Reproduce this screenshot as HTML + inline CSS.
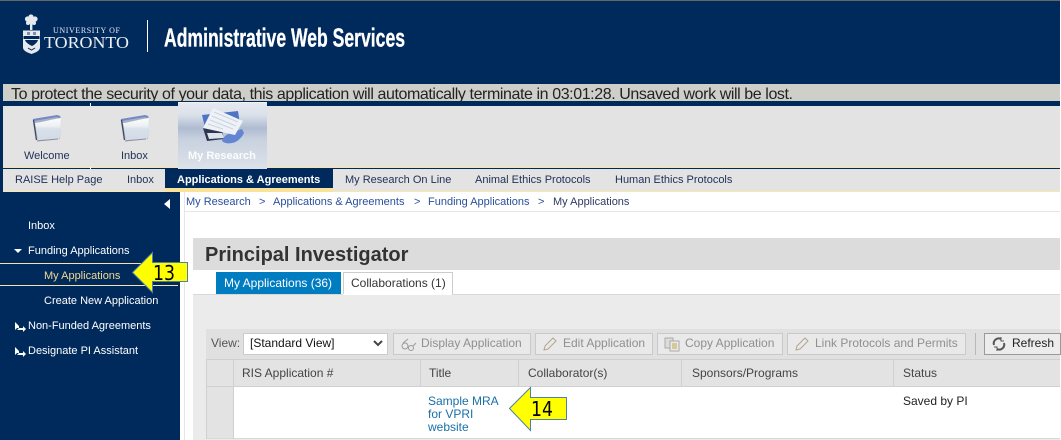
<!DOCTYPE html>
<html><head><meta charset="utf-8"><title>Administrative Web Services</title>
<style>
html,body{margin:0;padding:0;background:#fff}
#p{position:relative;width:1061px;height:440px;overflow:hidden;background:#fff;font:11px "Liberation Sans",Arial,sans-serif;color:#222}
#p div,#p span.t,#p svg{position:absolute}
.t{white-space:nowrap;line-height:14px;height:14px}
.s{color:#fff}
.n{color:#1f2f55}
.b{color:#2a4f9c}
.h{font-size:12px;color:#444}
.btn{background:#e9e9e9;border:1px solid #c9c9c9;box-sizing:border-box;top:333px;height:22px}
.g{font-size:12px;color:#8f8f8f}
.v{background:#d0d0d0;width:1px}
</style></head><body>
<div id="p">
<div style="left:0;top:0;width:1061px;height:106px;background:#002a5c"></div>
<div style="left:0;top:0;width:1061px;height:1px;background:#666"></div>
<div style="left:1060px;top:0;width:1px;height:440px;background:#fff"></div>

<!-- crest -->
<svg style="left:20px;top:12px" width="24" height="44" viewBox="0 0 24 44">
<g fill="#e6e9ee"><circle cx="11" cy="5" r="2.600"/><circle cx="7.500" cy="7" r="2.600"/><circle cx="15" cy="7" r="2.600"/><circle cx="11" cy="9" r="3"/><circle cx="8" cy="11" r="2"/><circle cx="14" cy="11" r="2"/><rect x="10" y="11" width="2.400" height="7"/>
<path d="M3 18.500h17v17c0 3-4 5-8.500 6.500C7 40.500 3 38.500 3 35.500z"/></g>
<path d="M3.500 24h16v3h-16z" fill="#002a5c"/>
<path d="M7 20h3v3H7zM13 20h3v3h-3z" fill="#7f8ea6"/>
<path d="M5 28c3 0 9 0 13 0-1 3-4 5-6 6-2-1-6-3-7-6z" fill="#002a5c"/>
<path d="M8 36l3.500 2 3.500-2" fill="none" stroke="#002a5c"/>
</svg>
<svg style="left:0;top:0" width="430" height="60">
<text x="53" y="33" font-family="Liberation Serif" font-size="8" fill="#e6e9ee" textLength="67" lengthAdjust="spacing">UNIVERSITY OF</text>
<text x="44" y="48" font-family="Liberation Serif" font-size="17" fill="#eef0f4" textLength="85" lengthAdjust="spacingAndGlyphs">TORONTO</text>
<rect x="147" y="20" width="1" height="32" fill="#fff"/>
<text x="164" y="46.500" font-family="Liberation Sans" font-weight="700" font-size="26" fill="#fff" stroke="#fff" stroke-width=".35" textLength="241" lengthAdjust="spacingAndGlyphs">Administrative Web Services</text>
</svg>

<!-- warning bar -->
<div style="left:3px;top:84px;width:1057px;height:17px;background:#cfcfca"></div>
<svg style="left:0;top:82px" width="820" height="22"><text x="11" y="17" font-family="Liberation Sans" font-size="16" fill="#222" textLength="782" lengthAdjust="spacing">To protect the security of your data, this application will automatically terminate in 03:01:28. Unsaved work will be lost.</text></svg>

<!-- main sidebar -->
<div style="left:0;top:106px;width:180px;height:334px;background:#002a5c"></div>

<!-- tab bar -->
<div style="left:3px;top:106px;width:1057px;height:61px;background:#e3e3e3"></div>
<div style="left:3px;top:167px;width:175px;height:1px;background:#f7e6a8"></div>
<div style="left:266px;top:167px;width:794px;height:1px;background:#f7e6a8"></div>
<div style="left:3px;top:168px;width:1057px;height:1px;background:#002a5c"></div>
<div style="left:90px;top:103px;width:1px;height:3px;background:#fff"></div>
<div style="left:90px;top:167px;width:1px;height:2px;background:#fff"></div>

<svg style="left:30px;top:113px" width="34" height="32" viewBox="0 0 34 32"><defs>
<linearGradient id="fg" x1="0" y1="0" x2="0" y2="1"><stop offset="0" stop-color="#fbfcfd"/><stop offset=".35" stop-color="#eef1f5"/><stop offset=".5" stop-color="#d8e0e9"/><stop offset="1" stop-color="#d2dbe6"/></linearGradient></defs>
<path d="M3 7L27 3l4 1-1 22-22 2z" fill="#a9b0bf"/>
<path d="M3 7l24-4 3 1" fill="none" stroke="#7189c9" stroke-width="2"/>
<path d="M3.500 7l3 20" stroke="#3d4660" stroke-width="1.300"/>
<path d="M5 10C13 9 23 6 31 5l-1 19c0 1-1 2-2 2L8 27z" fill="url(#fg)"/>
<path d="M7 28l21-2" stroke="#8a91a5"/>
</svg>
<svg style="left:118px;top:113px" width="34" height="32" viewBox="0 0 34 32">
<path d="M3 7L27 3l4 1-1 22-22 2z" fill="#a9b0bf"/>
<path d="M3 7l24-4 3 1" fill="none" stroke="#7189c9" stroke-width="2"/>
<path d="M3.500 7l3 20" stroke="#3d4660" stroke-width="1.300"/>
<path d="M5 10C13 9 23 6 31 5l-1 19c0 1-1 2-2 2L8 27z" fill="url(#fg)"/>
<path d="M7 28l21-2" stroke="#8a91a5"/>
</svg>
<span class="t n" style="left:24px;top:149px">Welcome</span>
<span class="t n" style="left:121px;top:149px">Inbox</span>

<!-- active tab -->
<div style="left:178px;top:102px;width:89px;height:67px;background:linear-gradient(#e4e8f0 0,#dbe1ea 18%,#aebbd1 38%,#c8d1df 55%,#dde2ea 100%);border-top:1px solid #f2f2f2;box-sizing:border-box"></div>
<svg style="left:198px;top:104px" width="48" height="42" viewBox="0 0 48 42">
<path d="M4 11L40 7l2 13L10 36z" fill="#4f73c4"/>
<path d="M5 24l4 13 17-2-2-8z" fill="#2e3550"/>
<path d="M9 29l2 6 15-1-2-5z" fill="#dfe4ea"/>
<path d="M24 37C26 30 34 28 44 25l2 4C44 33 40 38 34 39 30 40 26 39 24 37z" fill="#6486d2"/>
<path d="M15 4l30 13-8 14L5 24z" fill="#eef2f7"/>
<g stroke="#c8d3e2"><path d="M16 8l24 10M14 12l24 10M12 16l23 9M10 20l15 5"/></g>
</svg>
<span class="t" style="left:188px;top:149px;color:#fff;font-weight:700;opacity:.92">My Research</span>

<!-- sub nav -->
<div style="left:3px;top:169px;width:1057px;height:22px;background:#e3e3e3"></div>
<div style="left:3px;top:191px;width:1057px;height:1px;background:#f9e8a8"></div>
<div style="left:165px;top:169px;width:168px;height:19px;background:#002a5c"></div>
<div style="left:165px;top:188px;width:168px;height:4px;background:#f9e39a"></div>
<span class="t n" style="left:15px;top:173px">RAISE Help Page</span>
<span class="t n" style="left:127px;top:173px">Inbox</span>
<span class="t s" style="left:177px;top:173px;font-weight:700">Applications &amp; Agreements</span>
<span class="t n" style="left:345px;top:173px">My Research On Line</span>
<span class="t n" style="left:475px;top:173px">Animal Ethics Protocols</span>
<span class="t n" style="left:615px;top:173px">Human Ethics Protocols</span>

<!-- sidebar content -->
<svg style="left:0;top:192px" width="180" height="170">
<path d="M170 7l-6 5 6 5z" fill="#fff"/>
<path d="M14 57h8l-4 4z" fill="#fff"/>
<path d="M15 130v8l2-2 2 0v-2zM19 136h4v-2l3 3-3 3v-2h-6z" fill="#fff"/>
<path d="M15 155v8l2-2 2 0v-2zM19 161h4v-2l3 3-3 3v-2h-6z" fill="#fff"/>
</svg>
<span class="t s" style="left:28px;top:219px">Inbox</span>
<span class="t s" style="left:28px;top:244px">Funding Applications</span>
<div style="left:0;top:263px;width:178px;height:1px;background:#f3e3ad"></div>
<div style="left:0;top:285px;width:178px;height:1px;background:#f3e3ad"></div>
<span class="t" style="left:44px;top:269px;color:#f2d88e">My Applications</span>
<span class="t s" style="left:44px;top:294px">Create New Application</span>
<span class="t s" style="left:28px;top:319px">Non-Funded Agreements</span>
<span class="t s" style="left:28px;top:344px">Designate PI Assistant</span>

<!-- breadcrumb -->
<div style="left:184px;top:192px;width:1px;height:248px;background:#e6e6e6"></div>
<div style="left:184px;top:211px;width:876px;height:1px;background:#e6e6e6"></div>
<span class="t b" style="left:186px;top:195px">My Research</span>
<span class="t b" style="left:259px;top:195px">&gt;</span>
<span class="t b" style="left:273px;top:195px">Applications &amp; Agreements</span>
<span class="t b" style="left:414px;top:195px">&gt;</span>
<span class="t b" style="left:428px;top:195px">Funding Applications</span>
<span class="t b" style="left:538px;top:195px">&gt;</span>
<span class="t" style="left:553px;top:195px;color:#2f3a5e">My Applications</span>

<!-- heading -->
<div style="left:193px;top:238px;width:867px;height:32px;background:#dcdcdc"></div>
<span class="t" style="left:205px;top:243px;height:24px;line-height:24px;font-size:20px;font-weight:700;color:#333">Principal Investigator</span>

<!-- tabs -->
<div style="left:216px;top:272px;width:125px;height:22px;background:#007cc0"></div>
<div style="left:343px;top:272px;width:110px;height:23px;background:#fff;border:1px solid #ccc;border-bottom:0;box-sizing:border-box"></div>
<span class="t s" style="left:224px;top:276px;font-size:12px">My Applications (36)</span>
<span class="t" style="left:351px;top:276px;font-size:12px;color:#333">Collaborations (1)</span>

<!-- panel -->
<div style="left:193px;top:294px;width:867px;height:146px;background:#ebebeb;border-top:1px solid #d8d8d8;box-sizing:border-box"></div>
<div style="left:343px;top:294px;width:109px;height:1px;background:#fff"></div>

<!-- toolbar -->
<div style="left:206px;top:329px;width:854px;height:30px;background:#e0e0e0"></div>
<span class="t" style="left:211px;top:336px;font-size:12px;color:#555">View:</span>
<div style="left:243px;top:333px;width:145px;height:22px;background:#fff;border:1px solid #ccc;box-sizing:border-box"></div>
<span class="t" style="left:250px;top:336px;font-size:12px;color:#111">[Standard View]</span>
<svg style="left:373px;top:340px" width="10" height="8"><path d="M1 1l4 4 4-4" fill="none" stroke="#444" stroke-width="2"/></svg>

<div class="btn" style="left:393px;width:138px"></div>
<svg style="left:400px;top:337px" width="18" height="14" fill="none" stroke="#9a9a9a"><circle cx="5" cy="9" r="3"/><circle cx="11" cy="11" r="2.500"/><path d="M3 6l5-4M13 9l3-3"/></svg>
<span class="t g" style="left:421px;top:336px">Display Application</span>
<div class="btn" style="left:535px;width:118px"></div>
<svg style="left:542px;top:336px" width="16" height="16" fill="none" stroke="#b0a68f"><path d="M2 14l1-4 8-8 3 3-8 8z"/></svg>
<span class="t g" style="left:563px;top:336px">Edit Application</span>
<div class="btn" style="left:657px;width:126px"></div>
<svg style="left:664px;top:336px" width="16" height="16"><path d="M1 2h8v10H1z" fill="#dcdcdc" stroke="#aaa"/><path d="M6 5h9v10H6z" fill="#f0ead0" stroke="#a8a8b8"/><path d="M8 8h5M8 10h5M8 12h5" stroke="#b5a870"/></svg>
<span class="t g" style="left:685px;top:336px">Copy Application</span>
<div class="btn" style="left:787px;width:179px"></div>
<svg style="left:794px;top:336px" width="16" height="16" fill="none" stroke="#b0a68f"><path d="M2 14l1-4 8-8 3 3-8 8z"/></svg>
<span class="t g" style="left:815px;top:336px">Link Protocols and Permits</span>
<div style="left:975px;top:333px;width:1px;height:22px;background:#b8b8b8"></div>
<div style="left:984px;top:333px;width:77px;height:22px;background:#ececec;border:1px solid #999;box-sizing:border-box"></div>
<svg style="left:991px;top:336px" width="16" height="16" fill="none" stroke="#555" stroke-width="2"><path d="M3 9a5 5 0 0 1 7-6M13 7a5 5 0 0 1-7 6"/><path d="M10 1v4h3M6 15v-4H3" stroke-width="1"/></svg>
<span class="t" style="left:1012px;top:336px;font-size:12px;color:#222">Refresh</span>

<!-- table -->
<div style="left:206px;top:359px;width:854px;height:28px;background:#e3e3e3;border-top:1px solid #d0d0d0;border-bottom:1px solid #d0d0d0;box-sizing:border-box"></div>
<div style="left:206px;top:387px;width:854px;height:51px;background:#fff"></div>
<div style="left:206px;top:387px;width:27px;height:51px;background:#e3e3e3"></div>
<div style="left:206px;top:438px;width:854px;height:1px;background:#d8d8d8"></div>
<div class="v" style="left:206px;top:359px;height:80px"></div>
<div class="v" style="left:233px;top:359px;height:80px"></div>
<div class="v" style="left:420px;top:359px;height:27px"></div>
<div class="v" style="left:518px;top:359px;height:27px"></div>
<div class="v" style="left:681px;top:359px;height:27px"></div>
<div class="v" style="left:893px;top:359px;height:27px"></div>
<span class="t h" style="left:242px;top:366px">RIS Application #</span>
<span class="t h" style="left:429px;top:366px">Title</span>
<span class="t h" style="left:528px;top:366px">Collaborator(s)</span>
<span class="t h" style="left:692px;top:366px">Sponsors/Programs</span>
<span class="t h" style="left:903px;top:366px">Status</span>
<span class="t" style="left:428px;top:394px;font-size:12px;color:#1a6fa8">Sample MRA</span>
<span class="t" style="left:428px;top:407px;font-size:12px;color:#1a6fa8">for VPRI</span>
<span class="t" style="left:428px;top:420px;font-size:12px;color:#1a6fa8">website</span>
<span class="t" style="left:903px;top:394px;font-size:12px;color:#222">Saved by PI</span>

<!-- callouts -->
<svg style="left:0;top:0;pointer-events:none" width="1061" height="440">
<path d="M132.500 272.500L152.500 252.500V262.500H187.500V281.500H152.500V292.500Z" fill="#ff0" stroke="#4f81a8" stroke-width="1"/>
<path d="M509.500 408.500L530.500 387.500V397.500H566.500V419.500H530.500V430.500Z" fill="#ff0" stroke="#4f81a8" stroke-width="1"/>
<text x="153" y="280" font-family="DejaVu Sans" font-size="20" fill="#000" textLength="22" lengthAdjust="spacingAndGlyphs">13</text>
<text x="531" y="416" font-family="DejaVu Sans" font-size="20" fill="#000" textLength="22" lengthAdjust="spacingAndGlyphs">14</text>
</svg>
</div>
</body></html>
